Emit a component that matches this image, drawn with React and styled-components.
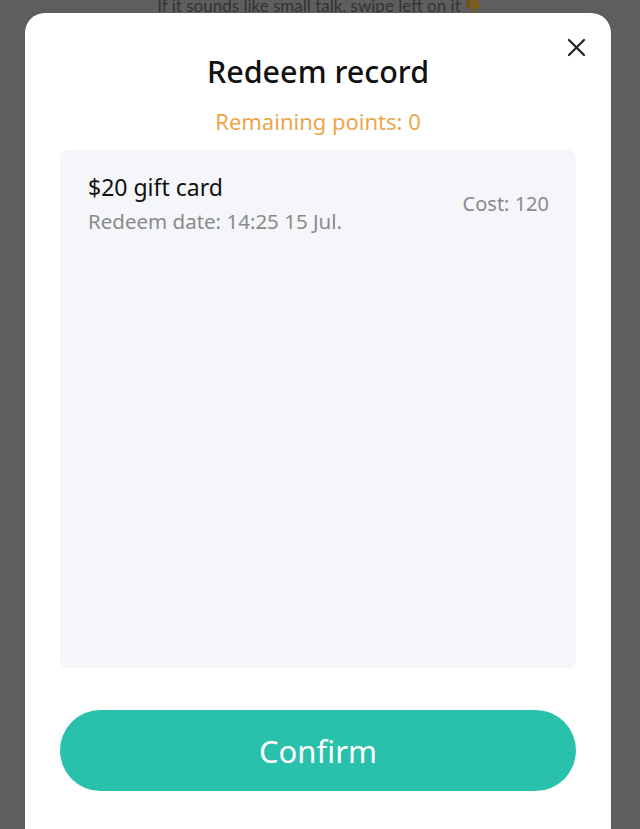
import React from "react";
import styled, { createGlobalStyle } from "styled-components";

const Global = createGlobalStyle`
  html, body {
    margin: 0;
    padding: 0;
    background: #5e5e5e;
  }
  * { box-sizing: border-box; }
`;

const Backdrop = styled.div`
  height: 829px;
  overflow: hidden;
  background: #5e5e5e;
  font-family: "Noto Sans", "Lato", sans-serif;
`;

const Banner = styled.div`
  height: 13px;
  overflow: hidden;
  display: flex;
  justify-content: center;
  align-items: flex-end;
`;

const BannerText = styled.span`
  display: flex;
  align-items: center;
  gap: 4px;
  font-family: "Lato", sans-serif;
  font-size: 17px;
  line-height: 22px;
  color: #333;
  margin-bottom: -4px;
  white-space: nowrap;
`;

const Modal = styled.div`
  position: relative;
  width: 586px;
  margin-left: 25px;
  height: 900px;
  background: #fff;
  border-radius: 20px 20px 0 0;
  padding: 40px 35px 0;
  display: flex;
  flex-direction: column;
`;

const CloseButton = styled.button`
  position: absolute;
  top: 23px;
  right: 24px;
  width: 22px;
  height: 22px;
  padding: 0;
  border: none;
  background: none;
  display: flex;
  align-items: center;
  justify-content: center;
`;

const Title = styled.h2`
  margin: 0;
  text-align: center;
  font-size: 30.5px;
  line-height: 36px;
  font-weight: 500;
  color: #111;
`;

const Points = styled.div`
  margin-top: 17px;
  text-align: center;
  font-size: 22px;
  line-height: 30px;
  color: #eba64d;
`;

const RecordList = styled.div`
  margin-top: 14px;
  height: 518px;
  background: #f4f6f9;
  border-radius: 8px;
  padding: 23px 27px 0 28px;
`;

const Record = styled.div`
  display: flex;
  align-items: center;
  justify-content: space-between;
`;

const RecordInfo = styled.div`
  display: flex;
  flex-direction: column;
  gap: 7px;
`;

const RecordName = styled.div`
  font-size: 23px;
  line-height: 28px;
  color: #111;
`;

const Muted = styled.div`
  font-size: ${(p) => (p.$small ? "20px" : "20.5px")};
  line-height: 26px;
  color: #8a8a8a;
`;

const ConfirmButton = styled.button`
  margin-top: 42px;
  height: 81px;
  width: 100%;
  border: none;
  border-radius: 41px;
  background: #29c1ab;
  color: #fff;
  font-family: "Noto Sans", "Lato", sans-serif;
  font-size: 31px;
`;

const ThumbDown = () => (
  <svg width="18" height="18" viewBox="0 0 18 18">
    <path
      d="M3 2h7c1.5 0 2.5.8 3 2l2 5c.4 1.2-.4 2.3-1.6 2.3H10l.6 3c.2 1-.5 1.8-1.4 1.8L6 11V2H3z"
      fill="#7d5d1f"
    />
    <rect x="1" y="2" width="4" height="9" rx="1" fill="#6e5219" />
  </svg>
);

const CloseIcon = () => (
  <svg width="19" height="19" viewBox="0 0 19 19">
    <path d="M2 2L17 17M17 2L2 17" stroke="#222" strokeWidth="2.2" strokeLinecap="round" />
  </svg>
);

export default function App() {
  return (
    <>
      <Global />
      <Backdrop>
        <Banner>
          <BannerText>
            If it sounds like small talk, swipe left on it <ThumbDown />
          </BannerText>
        </Banner>
        <Modal>
          <CloseButton aria-label="Close">
            <CloseIcon />
          </CloseButton>
          <Title>Redeem record</Title>
          <Points>Remaining points: 0</Points>
          <RecordList>
            <Record>
              <RecordInfo>
                <RecordName>$20 gift card</RecordName>
                <Muted>Redeem date: 14:25 15 Jul.</Muted>
              </RecordInfo>
              <Muted $small>Cost: 120</Muted>
            </Record>
          </RecordList>
          <ConfirmButton>Confirm</ConfirmButton>
        </Modal>
      </Backdrop>
    </>
  );
}
